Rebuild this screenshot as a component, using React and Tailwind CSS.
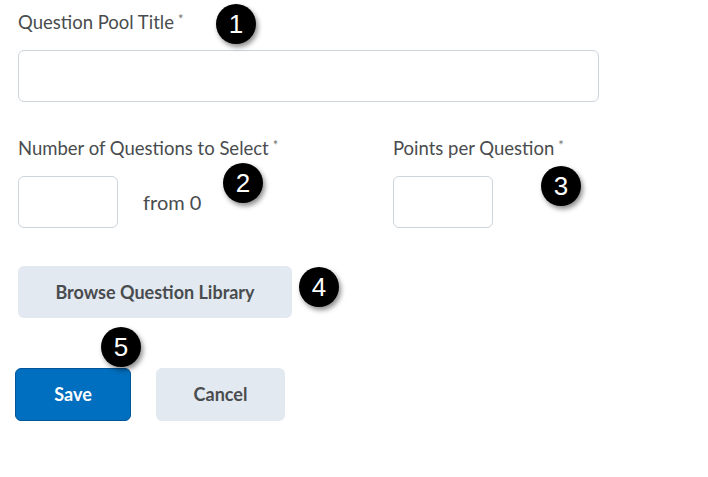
import { useState } from 'react'

function Badge({ n, className }) {
  return (
    <div
      className={`absolute flex h-10 w-10 items-center justify-center rounded-full bg-black text-[26px] leading-none text-white shadow-[2px_3px_5px_rgba(0,0,0,0.45)] ${className}`}
      style={{ fontFamily: '"Liberation Sans", Arial, sans-serif' }}
    >
      {n}
    </div>
  )
}

function Label({ children }) {
  return (
    <label className="flex h-6 items-center text-[18.5px] leading-6 text-[#494c4e]">
      {children}
      <span className="ml-[4px] -mt-[6px] text-[13px] leading-none text-[#6e7376]">*</span>
    </label>
  )
}

const inputClass =
  'h-[52px] rounded-md border border-[#cdd5dc] bg-white px-3 text-[17px] text-[#494c4e] focus:outline-none'

export default function App() {
  const [title, setTitle] = useState('')
  const [count, setCount] = useState('')
  const [points, setPoints] = useState('')

  return (
    <div
      className="relative h-[477px] w-[708px] overflow-hidden bg-white"
      style={{ fontFamily: 'Lato, "Noto Sans", sans-serif' }}
    >
      <div className="flex flex-col items-start pl-[18px] pt-[10px]">
        <Label>Question Pool Title</Label>
        <input
          value={title}
          onChange={(e) => setTitle(e.target.value)}
          className={`mt-4 w-[581px] ${inputClass}`}
        />

        <div className="mt-[34px] flex">
          <div className="w-[375px]">
            <Label>Number of Questions to Select</Label>
            <div className="mt-4 flex items-center gap-[25px]">
              <input
                value={count}
                onChange={(e) => setCount(e.target.value)}
                className={`w-[100px] ${inputClass}`}
              />
              <span className="text-[20px] text-[#494c4e]">from 0</span>
            </div>
          </div>
          <div>
            <Label>Points per Question</Label>
            <input
              value={points}
              onChange={(e) => setPoints(e.target.value)}
              className={`mt-4 w-[100px] ${inputClass}`}
            />
          </div>
        </div>

        <button className="mt-[38px] h-[52px] w-[274px] rounded-md bg-[#e3e9f1] text-[18px] font-bold text-[#494c4e]">
          Browse Question Library
        </button>
      </div>

      <div className="mt-[50px] flex gap-[25px] pl-[15px]">
        <button className="h-[53px] w-[116px] rounded-md border border-[#005599] bg-[#006fbf] text-[18px] font-bold text-white">
          Save
        </button>
        <button className="h-[53px] w-[129px] rounded-md bg-[#e3e9f1] text-[18px] font-bold text-[#494c4e]">
          Cancel
        </button>
      </div>

      <Badge n="1" className="left-[216px] top-[4px]" />
      <Badge n="2" className="left-[223px] top-[163px]" />
      <Badge n="3" className="left-[541px] top-[166px]" />
      <Badge n="4" className="left-[299px] top-[267px]" />
      <Badge n="5" className="left-[101px] top-[327px]" />
    </div>
  )
}
